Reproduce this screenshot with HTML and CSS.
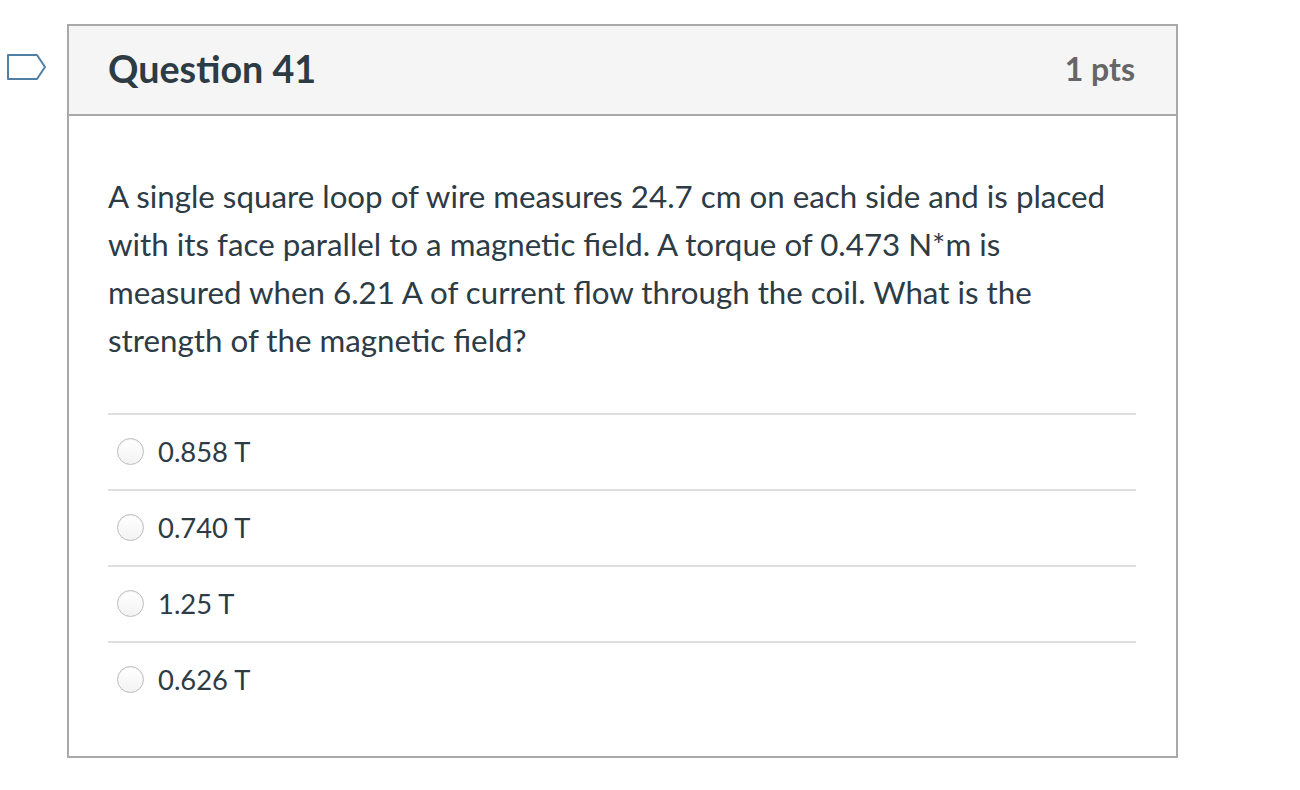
FILE: index.html
```html
<!DOCTYPE html>
<html>
<head>
<meta charset="utf-8">
<link rel="stylesheet" href="styles.css">
</head>
<body>
<div class="page">
  <div class="flag-col">
    <svg class="flag" width="42" height="30" viewBox="0 0 42 30">
      <path d="M1 1 H30 L38 13 L30 25 H1 Z" fill="none" stroke="#4f7fa6" stroke-width="2" stroke-linejoin="round"/>
    </svg>
  </div>
  <div class="question">
    <div class="q-header">
      <div class="q-title">Question 41</div>
      <div class="q-pts">1 pts</div>
    </div>
    <div class="q-body">
      <p class="q-text">A single square loop of wire measures 24.7 cm on each side and is placed with its face parallel to a magnetic field. A torque of 0.473 N*m is measured when 6.21 A of current flow through the coil. What is the strength of the magnetic field?</p>
      <div class="answers">
        <div class="answer"><span class="radio"></span><span class="label">0.858 T</span></div>
        <div class="answer"><span class="radio"></span><span class="label">0.740 T</span></div>
        <div class="answer"><span class="radio"></span><span class="label">1.25 T</span></div>
        <div class="answer"><span class="radio"></span><span class="label">0.626 T</span></div>
      </div>
    </div>
  </div>
</div>
</body>
</html>
```
FILE: styles.css
```css
html, body {
  margin: 0;
  padding: 0;
  background: #fff;
}
body {
  font-family: Lato, "Open Sans", sans-serif;
  color: #2d3b45;
}
.page {
  display: flex;
  align-items: flex-start;
  padding-top: 24px;
}
.flag-col {
  width: 67px;
  flex: none;
  padding-top: 30px;
  padding-left: 7px;
  box-sizing: border-box;
}
.flag {
  display: block;
}
.question {
  width: 1111px;
  flex: none;
  border: 2px solid #a9a9a9;
  box-sizing: border-box;
  height: 734px;
}
.q-header {
  display: flex;
  align-items: center;
  justify-content: space-between;
  height: 88px;
  box-sizing: border-box;
  padding: 0 41px 4px 39px;
  background: #f5f5f5;
  border-bottom: 2px solid #a9a9a9;
}
.q-header {
  height: 90px;
}
.q-title {
  font-weight: 700;
  font-size: 37.7px;
  color: #2d3b45;
}
.q-pts {
  font-weight: 700;
  font-size: 32px;
  color: #666;
}
.q-body {
  padding: 56px 40px 0 39px;
}
.q-text {
  margin: 0;
  font-size: 31.3px;
  line-height: 48px;
}
.answers {
  margin-top: 49px;
}
.answer {
  display: flex;
  align-items: center;
  height: 76px;
  box-sizing: border-box;
  padding-bottom: 2px;
  border-top: 2px solid #dedede;
}
.radio {
  width: 25px;
  height: 25px;
  border-radius: 50%;
  border: 1px solid #bdbdbd;
  background: linear-gradient(#fff, #f3f3f3);
  box-shadow: inset 0 1px 1px rgba(0,0,0,0.06);
  margin-left: 9px;
  margin-right: 14px;
  flex: none;
}
.label {
  font-size: 27.4px;
}
```
